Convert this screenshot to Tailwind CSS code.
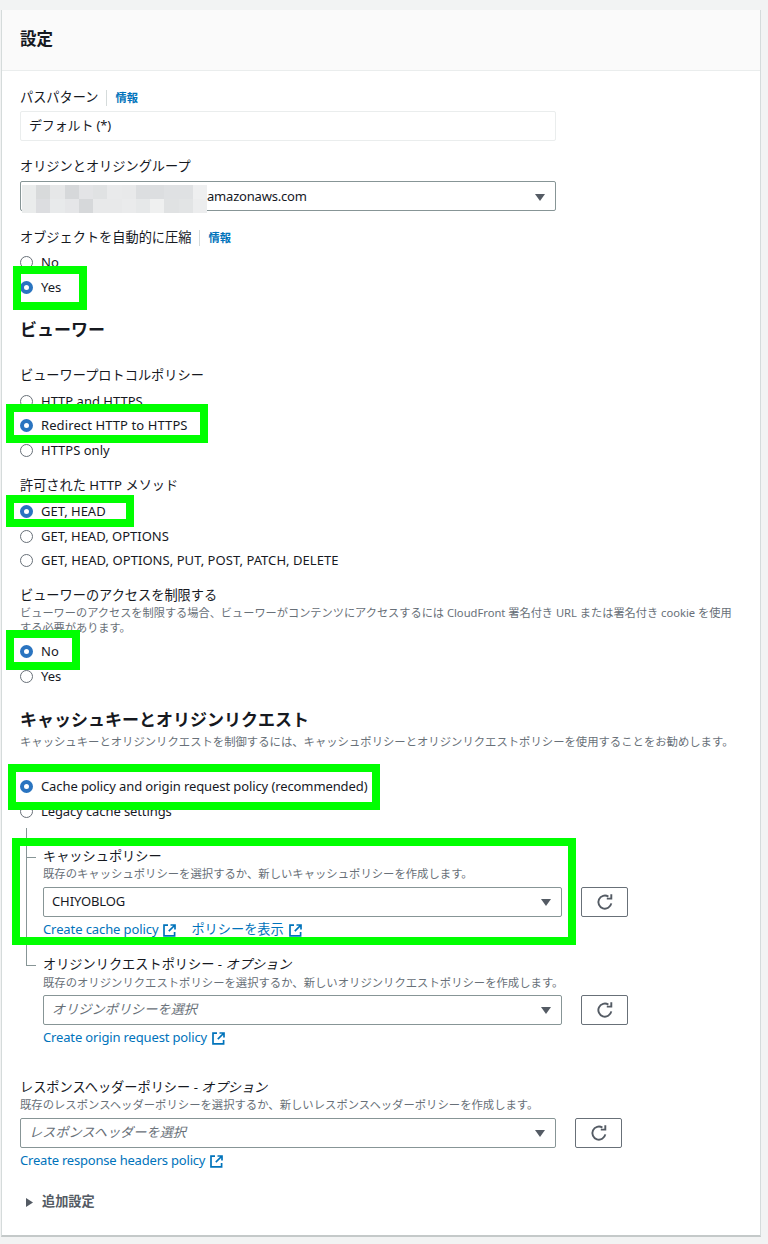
<!DOCTYPE html>
<html lang="ja">
<head>
    <meta charset="UTF-8">
    <meta name="viewport" content="width=device-width, initial-scale=1.0">
    <title>設定</title>
    <script src="https://cdn.jsdelivr.net/npm/@tailwindcss/browser@4"></script>
</head>
<body class="bg-[#f2f3f3] text-[#16191f] text-[13px] font-['Noto_Sans','Noto_Sans_CJK_JP',sans-serif]">
<div class="relative h-[1244px] overflow-hidden pt-[10px]">

    <div class="ml-px w-[760px] bg-white border-x border-[#d5dbdb] border-b-2 border-b-[#c4c9c9] pb-[24px]">
        <div class="h-[61px] bg-[#fafafa] border-b border-[#eaeded] flex items-center px-[18px] pb-[2px]">
            <h1 class="text-[16.5px] font-bold">設定</h1>
        </div>

        <div class="px-[18px] pt-[16px]">
            <!-- パスパターン -->
            <div class="h-5 pt-[2px] flex items-center text-[13.2px]">
                <span>パスパターン</span>
                <span class="ml-2 h-[16px] border-l border-[#d5dbdb]"></span>
                <a class="ml-2 text-[11.3px] font-bold text-[#0073bb]">情報</a>
            </div>
            <div class="mt-1 h-[30px] w-[536px] border border-[#eaeded] rounded-[2px] flex items-center px-2 tracking-[-0.15px]">デフォルト (*)</div>

            <!-- オリジン -->
            <div class="mt-[15px] h-5 pt-[2px] flex items-center text-[13.2px]">オリジンとオリジングループ</div>
            <div class="mt-[5px] h-[30px] pt-[2px] w-[536px] border border-[#879596] rounded-[2px] flex items-center justify-between pl-[186px] pr-[10px]">
                <span class="tracking-[-0.2px]">amazonaws.com</span>
                <svg class="w-[10px] h-[7px]" viewBox="0 0 10 7"><path d="M0 0h10L5 7z" fill="#545b64"/></svg>
            </div>

            <!-- 圧縮 -->
            <div class="mt-[16px] h-5 pt-[2px] flex items-center text-[13.2px]">
                <span>オブジェクトを自動的に圧縮</span>
                <span class="ml-2 h-[16px] border-l border-[#d5dbdb]"></span>
                <a class="ml-2 text-[11.3px] font-bold text-[#0073bb]">情報</a>
            </div>
            <div class="mt-[3px]">
                <div class="h-[25px] flex items-center gap-2"><span class="w-[13px] h-[13px] rounded-full border border-[#687078]"></span>No</div>
                <div class="h-[25px] flex items-center gap-2"><span class="w-[13px] h-[13px] rounded-full border-[4px] border-[#2a74c0]"></span>Yes</div>
            </div>

            <!-- ビューワー -->
            <h2 class="mt-[18px] h-6 flex items-center text-[17px] font-bold">ビューワー</h2>
            <div class="mt-[23px] h-5 pt-[2px] flex items-center text-[13.2px]">ビューワープロトコルポリシー</div>
            <div class="mt-1">
                <div class="h-[24.5px] flex items-center gap-2"><span class="w-[13px] h-[13px] rounded-full border border-[#687078]"></span>HTTP and HTTPS</div>
                <div class="h-[24.5px] flex items-center gap-2 tracking-[0.1px]"><span class="w-[13px] h-[13px] rounded-full border-[4px] border-[#2a74c0]"></span>Redirect HTTP to HTTPS</div>
                <div class="h-[24.5px] flex items-center gap-2"><span class="w-[13px] h-[13px] rounded-full border border-[#687078]"></span>HTTPS only</div>
            </div>

            <div class="mt-[12.5px] h-5 pt-[2px] flex items-center text-[13.2px] whitespace-pre">許可された HTTP メソッド</div>
            <div class="mt-[4.5px]">
                <div class="h-[24.5px] flex items-center gap-2"><span class="w-[13px] h-[13px] rounded-full border-[4px] border-[#2a74c0]"></span>GET, HEAD</div>
                <div class="h-[24.5px] flex items-center gap-2"><span class="w-[13px] h-[13px] rounded-full border border-[#687078]"></span>GET, HEAD, OPTIONS</div>
                <div class="h-[24.5px] flex items-center gap-2 tracking-[0.05px]"><span class="w-[13px] h-[13px] rounded-full border border-[#687078]"></span>GET, HEAD, OPTIONS, PUT, POST, PATCH, DELETE</div>
            </div>

            <div class="mt-[12px] h-5 pt-[2px] flex items-center text-[13.2px]">ビューワーのアクセスを制限する</div>
            <p class="text-[11.2px] leading-[15px] text-[#687078]">ビューワーのアクセスを制限する場合、ビューワーがコンテンツにアクセスするには CloudFront 署名付き URL または署名付き cookie を使用<br>する必要があります。</p>
            <div class="mt-[4px]">
                <div class="h-[25px] flex items-center gap-2"><span class="w-[13px] h-[13px] rounded-full border-[4px] border-[#2a74c0]"></span>No</div>
                <div class="h-[25px] flex items-center gap-2"><span class="w-[13px] h-[13px] rounded-full border border-[#687078]"></span>Yes</div>
            </div>

            <!-- キャッシュキー -->
            <h2 class="mt-[19px] h-6 flex items-center text-[17px] font-bold">キャッシュキーとオリジンリクエスト</h2>
            <p class="mt-[1.5px] text-[11.35px] leading-[15px] text-[#687078]">キャッシュキーとオリジンリクエストを制御するには、キャッシュポリシーとオリジンリクエストポリシーを使用することをお勧めします。</p>
            <div class="mt-[26px]">
                <div class="h-[24.5px] flex items-center gap-2 tracking-[-0.1px]"><span class="w-[13px] h-[13px] rounded-full border-[4px] border-[#2a74c0]"></span>Cache policy and origin request policy (recommended)</div>
                <div class="h-[24.5px] flex items-center gap-2 tracking-[-0.1px]"><span class="w-[13px] h-[13px] rounded-full border border-[#687078]"></span>Legacy cache settings</div>
            </div>

            <!-- ツリー -->
            <div class="relative pl-[23px] pt-[22.5px]">
                <span class="absolute left-[6px] top-[4px] h-[138px] w-[10px] border-l border-b border-[#879596]"></span>
                <span class="absolute left-[6px] top-[33px] w-[10px] border-t border-[#879596]"></span>

                <div class="h-5 pt-[2px] flex items-center text-[13.2px]">キャッシュポリシー</div>
                <p class="h-[15px] text-[11.35px] leading-[15px] text-[#687078]">既存のキャッシュポリシーを選択するか、新しいキャッシュポリシーを作成します。</p>
                <div class="mt-[6px] flex items-center gap-[19px]">
                    <div class="h-[30px] w-[519px] border border-[#879596] rounded-[2px] flex items-center justify-between px-2 pr-[10px]">
                        <span class="tracking-[-0.1px]">CHIYOBLOG</span>
                        <svg class="w-[10px] h-[7px]" viewBox="0 0 10 7"><path d="M0 0h10L5 7z" fill="#545b64"/></svg>
                    </div>
                    <button class="h-[30px] w-[47px] border border-[#687078] rounded-[2px] flex items-center justify-center">
                        <svg class="w-[18px] h-[18px]" viewBox="0 0 16 16" fill="none" stroke="#545b64" stroke-width="1.7"><path d="M13.6 9.2A5.8 5.8 0 1 1 11 3.2"/><path d="M13.6 1v4h-4"/></svg>
                    </button>
                </div>
                <div class="mt-[4px] h-[18px] flex items-center text-[#0073bb]">
                    <a class="tracking-[-0.1px]">Create cache policy</a>
                    <svg class="ml-[5px] w-[13px] h-[13px]" viewBox="0 0 13 13" fill="none" stroke="#0073bb" stroke-width="1.7"><path d="M5 1.2H1v10.6h10.6V8"/><path d="M7.5 1h4.5v4.5M12 1 5.8 7.2"/></svg>
                    <a class="ml-[15px] text-[13.2px]">ポリシーを表示</a>
                    <svg class="ml-[5px] w-[13px] h-[13px]" viewBox="0 0 13 13" fill="none" stroke="#0073bb" stroke-width="1.7"><path d="M5 1.2H1v10.6h10.6V8"/><path d="M7.5 1h4.5v4.5M12 1 5.8 7.2"/></svg>
                </div>

                <div class="mt-[15px] h-5 pt-[2px] flex items-center text-[13.2px]"><span>オリジンリクエストポリシー - <i>オプション</i></span></div>
                <p class="h-[15px] mt-[0.5px] text-[11.35px] leading-[15px] text-[#687078]">既存のオリジンリクエストポリシーを選択するか、新しいオリジンリクエストポリシーを作成します。</p>
                <div class="mt-[5.5px] flex items-center gap-[19px]">
                    <div class="h-[30px] w-[519px] border border-[#879596] rounded-[2px] flex items-center justify-between px-2 pr-[10px]">
                        <i class="text-[#687078] text-[13.2px]">オリジンポリシーを選択</i>
                        <svg class="w-[10px] h-[7px]" viewBox="0 0 10 7"><path d="M0 0h10L5 7z" fill="#545b64"/></svg>
                    </div>
                    <button class="h-[30px] w-[47px] border border-[#687078] rounded-[2px] flex items-center justify-center">
                        <svg class="w-[18px] h-[18px]" viewBox="0 0 16 16" fill="none" stroke="#545b64" stroke-width="1.7"><path d="M13.6 9.2A5.8 5.8 0 1 1 11 3.2"/><path d="M13.6 1v4h-4"/></svg>
                    </button>
                </div>
                <div class="mt-[4px] h-[18px] flex items-center text-[#0073bb]">
                    <a class="tracking-[-0.15px]">Create origin request policy</a>
                    <svg class="ml-[5px] w-[13px] h-[13px]" viewBox="0 0 13 13" fill="none" stroke="#0073bb" stroke-width="1.7"><path d="M5 1.2H1v10.6h10.6V8"/><path d="M7.5 1h4.5v4.5M12 1 5.8 7.2"/></svg>
                </div>
            </div>

            <!-- レスポンスヘッダー -->
            <div class="mt-[30px] h-5 pt-[2px] flex items-center text-[13.2px]"><span>レスポンスヘッダーポリシー - <i>オプション</i></span></div>
            <p class="h-[15px] text-[11.35px] leading-[15px] text-[#687078]">既存のレスポンスヘッダーポリシーを選択するか、新しいレスポンスヘッダーポリシーを作成します。</p>
            <div class="mt-[6px] flex items-center gap-[19px]">
                <div class="h-[30px] w-[536px] border border-[#879596] rounded-[2px] flex items-center justify-between px-2 pr-[10px]">
                    <i class="text-[#687078] text-[13.2px]">レスポンスヘッダーを選択</i>
                    <svg class="w-[10px] h-[7px]" viewBox="0 0 10 7"><path d="M0 0h10L5 7z" fill="#545b64"/></svg>
                </div>
                <button class="h-[30px] w-[47px] border border-[#687078] rounded-[2px] flex items-center justify-center">
                    <svg class="w-[18px] h-[18px]" viewBox="0 0 16 16" fill="none" stroke="#545b64" stroke-width="1.7"><path d="M13.6 9.2A5.8 5.8 0 1 1 11 3.2"/><path d="M13.6 1v4h-4"/></svg>
                </button>
            </div>
            <div class="mt-[4px] h-[18px] flex items-center text-[#0073bb]">
                <a class="tracking-[-0.2px]">Create response headers policy</a>
                <svg class="ml-[5px] w-[13px] h-[13px]" viewBox="0 0 13 13" fill="none" stroke="#0073bb" stroke-width="1.7"><path d="M5 1.2H1v10.6h10.6V8"/><path d="M7.5 1h4.5v4.5M12 1 5.8 7.2"/></svg>
            </div>

            <div class="mt-[21px] h-5 pt-[2px] flex items-center font-bold text-[#545b64] text-[13.2px]">
                <svg class="ml-[6px] w-[7px] h-[9px]" viewBox="0 0 7 9"><path d="M0 0l7 4.5L0 9z" fill="#545b64"/></svg>
                <span class="ml-[9px]">追加設定</span>
            </div>
        </div>
    </div>

    <!-- モザイク -->
    <div class="absolute left-[22px] top-[185px] w-[185px] h-[28px] grid grid-cols-13 grid-rows-2">
        <span class="bg-[#eaecec]"></span><span class="bg-[#d8dadb]"></span><span class="bg-[#e6e7e8]"></span><span class="bg-[#d6d8da]"></span><span class="bg-[#e3e4e6]"></span><span class="bg-[#e0e2e3]"></span><span class="bg-[#e9eaeb]"></span><span class="bg-[#e8e9ea]"></span><span class="bg-[#dcdee0]"></span><span class="bg-[#dcdee0]"></span><span class="bg-[#dfe1e3]"></span><span class="bg-[#dfe1e3]"></span><span class="bg-[#eeeff0]"></span>
        <span class="bg-[#eaecec]"></span><span class="bg-[#dcdde0]"></span><span class="bg-[#e8eaeb]"></span><span class="bg-[#e5e6e8]"></span><span class="bg-[#d6d8da]"></span><span class="bg-[#e8e9ea]"></span><span class="bg-[#e8e9ea]"></span><span class="bg-[#eaebec]"></span><span class="bg-[#e6e8e9]"></span><span class="bg-[#eff0f0]"></span><span class="bg-[#e0e2e3]"></span><span class="bg-[#e2e4e5]"></span><span class="bg-[#ecedee]"></span>
    </div>

    <!-- 緑の枠 -->
    <div class="absolute left-[13px] top-[266px] w-[74px] h-[44px] border-[8px] border-[#00ff00]"></div>
    <div class="absolute left-[6px] top-[404px] w-[202px] h-[39px] border-[8px] border-[#00ff00]"></div>
    <div class="absolute left-[6px] top-[495px] w-[128px] h-[32px] border-[8px] border-[#00ff00]"></div>
    <div class="absolute left-[6px] top-[630px] w-[74px] h-[40px] border-[8px] border-[#00ff00]"></div>
    <div class="absolute left-[8px] top-[764px] w-[372px] h-[46px] border-[8px] border-[#00ff00]"></div>
    <div class="absolute left-[12px] top-[838px] w-[564px] h-[107px] border-[8px] border-[#00ff00]"></div>
</div>
</body>
</html>
